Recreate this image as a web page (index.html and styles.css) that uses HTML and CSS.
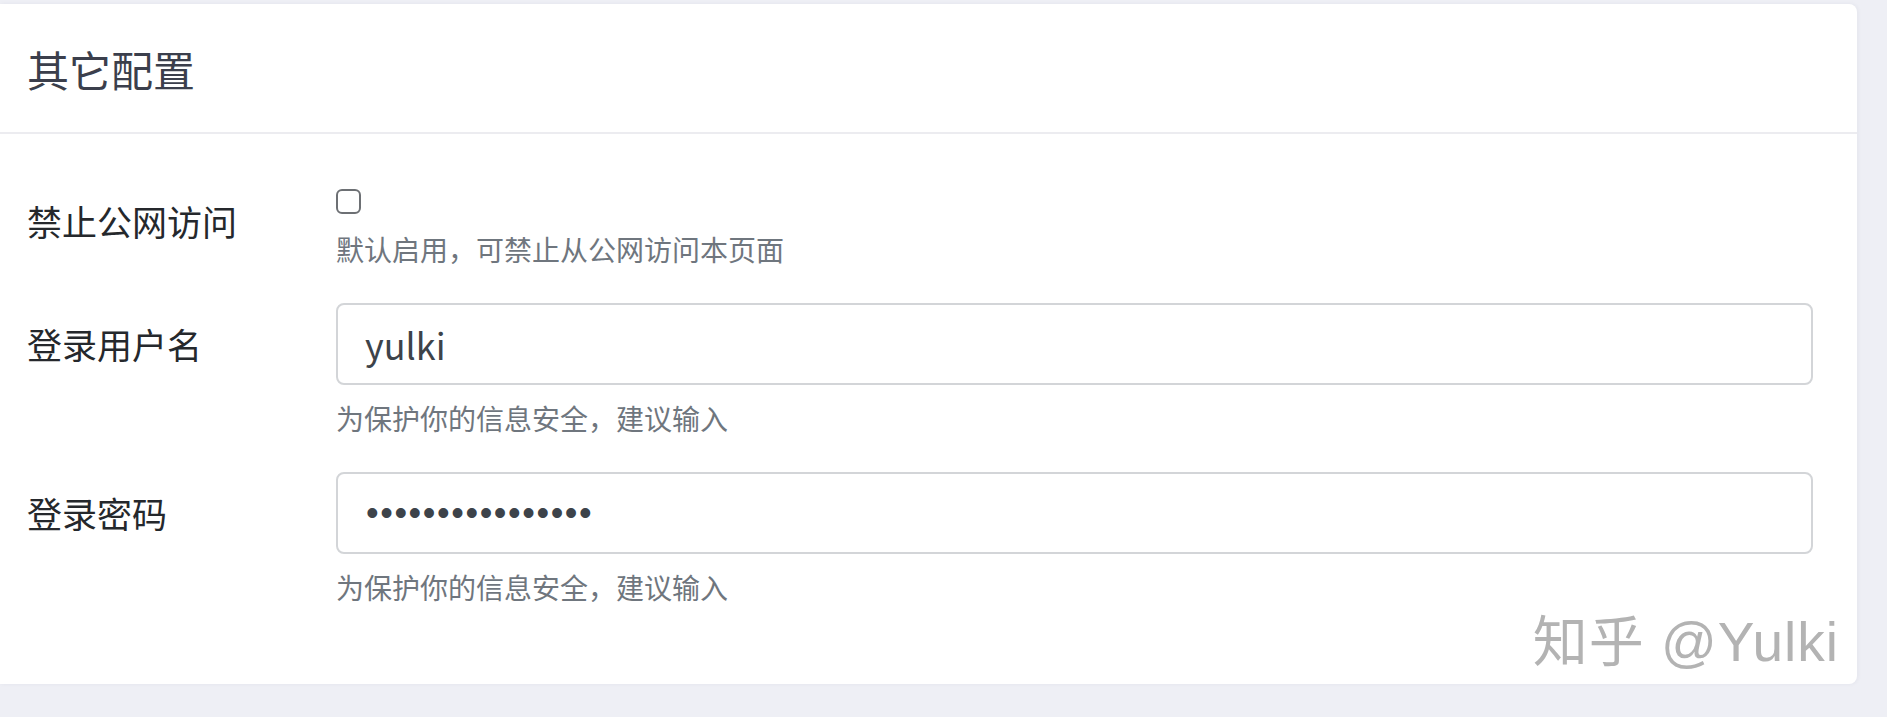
FILE: index.html
```html
<!DOCTYPE html>
<html lang="zh-CN">
<head>
<meta charset="utf-8">
<title>其它配置</title>
<link rel="stylesheet" href="styles.css">
</head>
<body>
<section class="card">
  <header class="card-header">其它配置</header>
  <div class="card-body">
    <div class="form-row">
      <label class="form-label form-label-check" for="deny">禁止公网访问</label>
      <div class="form-field">
        <input type="checkbox" id="deny" class="check">
        <div class="help help-check">默认启用，可禁止从公网访问本页面</div>
      </div>
    </div>
    <div class="form-row">
      <label class="form-label" for="user">登录用户名</label>
      <div class="form-field">
        <input type="text" id="user" class="text-input" value="yulki">
        <div class="help">为保护你的信息安全，建议输入</div>
      </div>
    </div>
    <div class="form-row">
      <label class="form-label" for="pwd">登录密码</label>
      <div class="form-field">
        <input type="password" id="pwd" class="text-input pwd-input" value="abcdefghijklmnop">
        <div class="help">为保护你的信息安全，建议输入</div>
      </div>
    </div>
    <div class="watermark">知乎 @Yulki</div>
  </div>
</section>
</body>
</html>
```

FILE: styles.css
```css
html, body {
  margin: 0;
  padding: 0;
}

body {
  background: #eeeff5;
  padding-top: 4px;
  font-family: "Noto Sans CJK SC", "Noto Sans", sans-serif;
  width: 1887px;
  height: 717px;
  box-sizing: border-box;
  overflow: hidden;
}

.card {
  width: 1857px;
  background: #ffffff;
  border-radius: 0 8px 8px 0;
  box-shadow: 1px 0 4px rgba(40, 40, 80, 0.05);
}

.card-header {
  height: 128px;
  display: flex;
  align-items: center;
  padding: 0 27px;
  font-size: 42px;
  color: #3b3f4c;
  border-bottom: 2px solid #ececf0;
}

.card-body {
  position: relative;
  padding: 55px 44px 76px 27px;
  display: flex;
  flex-direction: column;
  gap: 33px;
}

.form-row {
  display: grid;
  grid-template-columns: 309px 1fr;
  align-items: start;
}

.form-label {
  font-size: 35px;
  line-height: 82px;
  color: #25282c;
}

.form-label-check {
  line-height: 42px;
  margin-top: 11px;
}

.form-field {
  display: flex;
  flex-direction: column;
  align-items: flex-start;
}

.check {
  appearance: none;
  -webkit-appearance: none;
  width: 25px;
  height: 25px;
  margin: 0;
  border: 2px solid #6d7074;
  border-radius: 6px;
  background: #fff;
  box-sizing: border-box;
}

.help {
  font-size: 28px;
  line-height: 42px;
  color: #6f767e;
  margin-top: 12px;
}

.help-check {
  margin-top: 14px;
}

.text-input {
  width: 100%;
  height: 82px;
  box-sizing: border-box;
  border: 2px solid #d3d5d8;
  border-radius: 8px;
  padding: 0 27px;
  font-family: "Noto Sans CJK SC", "Noto Sans", sans-serif;
  font-size: 36px;
  color: #3d434a;
  background: #fff;
  outline: none;
}

.pwd-input {
  font-family: "Liberation Sans", sans-serif;
  letter-spacing: 1.6px;
  padding-left: 28px;
}

.watermark {
  position: absolute;
  right: 18px;
  bottom: 12px;
  font-family: "Liberation Sans", "Noto Sans CJK SC", sans-serif;
  font-size: 55px;
  line-height: 60px;
  color: #b3b3b3;
  text-shadow: 2px 1px 0 rgba(255, 255, 255, 0.9);
  letter-spacing: 1px;
}
```
